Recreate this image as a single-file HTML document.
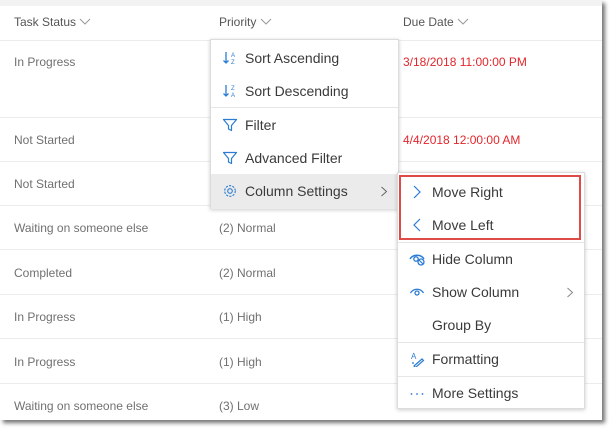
<!DOCTYPE html>
<html><head><style>
*{margin:0;padding:0;box-sizing:border-box}
body{width:615px;height:436px;background:#fff;position:relative;overflow:hidden;font-family:"Liberation Sans",sans-serif}
.box{position:absolute;left:0;top:0;width:602px;height:420px;background:#fff;box-shadow:3px 3px 4px rgba(0,0,0,.55)}
.strip{position:absolute;left:0;top:0;width:602px;height:6px;background:#f2f2f2}
.t{position:absolute;font-size:12px;color:#707070;white-space:nowrap}
.h{color:#555;font-size:12px}
.red{color:#e3262c}
.line{position:absolute;left:0;width:602px;height:1px;background:#ececec}
.menu{position:absolute;background:#fff;border:1px solid #dcdcdc;box-shadow:0 1px 4px rgba(0,0,0,.2)}
.it{position:absolute;left:0;right:0;height:34px;font-size:14px;color:#3a3a3a;padding-left:34px;line-height:34px;white-space:nowrap}
.ic{position:absolute;left:11px;top:9px;width:16px;height:16px}
.dv{position:absolute;left:0;right:0;height:1px;background:#e6e6e6}
.chev{position:absolute;right:10px;top:12px}
</style></head><body>
<div class="box">
<div class="strip"></div>
<div class="t h" style="left:14px;top:15px">Task Status <svg width="12" height="8" viewBox="0 0 12 8"><path d="M1 1l5 5 5-5" fill="none" stroke="#999"/></svg></div>
<div class="t h" style="left:219px;top:15px">Priority <svg width="12" height="8" viewBox="0 0 12 8"><path d="M1 1l5 5 5-5" fill="none" stroke="#999"/></svg></div>
<div class="t h" style="left:403px;top:15px">Due Date <svg width="12" height="8" viewBox="0 0 12 8"><path d="M1 1l5 5 5-5" fill="none" stroke="#999"/></svg></div>
<div class="line" style="top:40px"></div>
<div class="line" style="top:117px"></div>
<div class="line" style="top:161px"></div>
<div class="line" style="top:205px"></div>
<div class="line" style="top:249px"></div>
<div class="line" style="top:294px"></div>
<div class="line" style="top:338px"></div>
<div class="line" style="top:383px"></div>
<div class="t" style="left:14px;top:55px">In Progress</div>
<div class="t red" style="left:403px;top:55px">3/18/2018 11:00:00 PM</div>
<div class="t" style="left:14px;top:133px">Not Started</div>
<div class="t red" style="left:403px;top:133px">4/4/2018 12:00:00 AM</div>
<div class="t" style="left:14px;top:177px">Not Started</div>
<div class="t" style="left:14px;top:221px">Waiting on someone else</div>
<div class="t" style="left:219px;top:221px">(2) Normal</div>
<div class="t" style="left:14px;top:266px">Completed</div>
<div class="t" style="left:219px;top:266px">(2) Normal</div>
<div class="t" style="left:14px;top:310px">In Progress</div>
<div class="t" style="left:219px;top:310px">(1) High</div>
<div class="t" style="left:14px;top:355px">In Progress</div>
<div class="t" style="left:219px;top:355px">(1) High</div>
<div class="t" style="left:14px;top:399px">Waiting on someone else</div>
<div class="t" style="left:219px;top:399px">(3) Low</div>
</div>

<div class="menu" style="left:210px;top:39px;width:189px;height:170px">
<div class="it" style="top:1px"><svg class="ic" viewBox="0 0 16 16"><path d="M4 2v11M1.5 10.5L4 13l2.5-2.5" fill="none" stroke="#2b7cd3" stroke-width="1.3"/><text x="9" y="7" font-size="6" fill="#2b7cd3" font-family="Liberation Sans">A</text><text x="9" y="14" font-size="6" fill="#2b7cd3" font-family="Liberation Sans">Z</text></svg>Sort Ascending</div>
<div class="it" style="top:34px"><svg class="ic" viewBox="0 0 16 16"><path d="M4 2v11M1.5 10.5L4 13l2.5-2.5" fill="none" stroke="#2b7cd3" stroke-width="1.3"/><text x="9" y="7" font-size="6" fill="#2b7cd3" font-family="Liberation Sans">Z</text><text x="9" y="14" font-size="6" fill="#2b7cd3" font-family="Liberation Sans">A</text></svg>Sort Descending</div>
<div class="dv" style="top:67px"></div>
<div class="it" style="top:68px"><svg class="ic" viewBox="0 0 16 16"><path d="M1.5 2.5h13L9.5 8.5v5l-3-1.5v-3.5z" fill="none" stroke="#2b7cd3" stroke-width="1.2" stroke-linejoin="round"/></svg>Filter</div>
<div class="it" style="top:101px"><svg class="ic" viewBox="0 0 16 16"><path d="M1.5 2.5h13L9.5 8.5v5l-3-1.5v-3.5z" fill="none" stroke="#2b7cd3" stroke-width="1.2" stroke-linejoin="round"/></svg>Advanced Filter</div>
<div class="it" style="top:134px;height:35px;background:#ebebeb"><svg class="ic" viewBox="0 0 16 16"><circle cx="8" cy="8" r="2.3" fill="none" stroke="#2b7cd3" stroke-width="1.1"/><circle cx="8" cy="8" r="5.3" fill="none" stroke="#2b7cd3" stroke-width="1.1" stroke-dasharray="2.2 1.2"/></svg>Column Settings<svg class="chev" width="8" height="11" viewBox="0 0 8 11"><path d="M1.5 1l5 4.5-5 4.5" fill="none" stroke="#666"/></svg></div>
</div>

<div class="menu" style="left:397px;top:172px;width:188px;height:237px">
<div class="it" style="top:2px"><svg class="ic" viewBox="0 0 16 16"><path d="M5 2l6 6-6 6" fill="none" stroke="#2b7cd3" stroke-width="1.2"/></svg>Move Right</div>
<div class="it" style="top:35px"><svg class="ic" viewBox="0 0 16 16"><path d="M11 2L5 8l6 6" fill="none" stroke="#2b7cd3" stroke-width="1.2"/></svg>Move Left</div>
<div class="dv" style="top:69px"></div>
<div class="it" style="top:69px"><svg class="ic" viewBox="0 0 16 16"><path d="M1 8c3-5 11-5 14 0" fill="none" stroke="#2b7cd3" stroke-width="1.4"/><circle cx="7" cy="8" r="2.2" fill="none" stroke="#2b7cd3" stroke-width="1.3"/><circle cx="12" cy="11" r="3" fill="#fff" stroke="#2b7cd3" stroke-width="1.3"/><path d="M10 9l4 4" stroke="#2b7cd3" stroke-width="1.2"/></svg>Hide Column</div>
<div class="it" style="top:102px"><svg class="ic" viewBox="0 0 16 16"><path d="M1.5 9c3-5 10-5 13 0" fill="none" stroke="#2b7cd3" stroke-width="1.3"/><circle cx="8" cy="9" r="2" fill="none" stroke="#2b7cd3" stroke-width="1.3"/></svg>Show Column<svg class="chev" width="8" height="11" viewBox="0 0 8 11"><path d="M1.5 1l5 4.5-5 4.5" fill="none" stroke="#888"/></svg></div>
<div class="it" style="top:135px">Group By</div>
<div class="dv" style="top:169px"></div>
<div class="it" style="top:169px"><svg class="ic" viewBox="0 0 16 16"><text x="2" y="8" font-size="8" fill="#2b7cd3" font-family="Liberation Sans">A</text><path d="M5 15l8-7 1.5 1.5-8 7z M5 12h-2" fill="none" stroke="#2b7cd3" stroke-width="1.2"/></svg>Formatting</div>
<div class="dv" style="top:203px"></div>
<div class="it" style="top:203px"><svg class="ic" viewBox="0 0 16 16"><circle cx="2.5" cy="9" r="0.9" fill="#2b7cd3"/><circle cx="8" cy="9" r="0.9" fill="#2b7cd3"/><circle cx="13.5" cy="9" r="0.9" fill="#2b7cd3"/></svg>More Settings</div>
</div>
<div style="position:absolute;left:399px;top:175px;width:182px;height:65px;border:2px solid #dd4a48"></div>
</body></html>
